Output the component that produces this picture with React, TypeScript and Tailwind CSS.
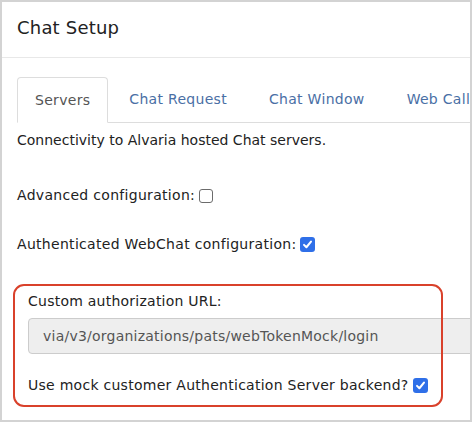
import React from "react";

const font = { fontFamily: '"DejaVu Sans", sans-serif' };

function Box({ checked }: { checked?: boolean }) {
  if (checked) {
    return (
      <span className="inline-flex w-[15px] h-[15px] rounded-[3px] bg-[#2f6fe8] items-center justify-center align-middle">
        <svg width="11" height="11" viewBox="0 0 12 12">
          <path d="M2.2 6.4 L4.8 9 L9.8 2.8" fill="none" stroke="white" strokeWidth="2.2" strokeLinecap="round" strokeLinejoin="round" />
        </svg>
      </span>
    );
  }
  return <span className="inline-block w-[14px] h-[14px] rounded-[3px] border border-[#6b6b6b] bg-white align-middle" />;
}

export default function App() {
  return (
    <div className="relative w-[472px] h-[422px] border-2 border-[#d3d3d3] bg-white overflow-hidden text-[#222] text-[14px]" style={font}>
      <div className="h-[56px] border-b border-[#e8e8e8] pl-[15px] flex items-center">
        <span className="text-[18px] text-[#222] pb-[5px] tracking-[0.2px]">Chat Setup</span>
      </div>
      <div className="pl-[15px]">
        <div className="mt-[19px] flex h-[46px] border-b border-[#dddddd] whitespace-nowrap tracking-[0.3px]">
          <div className="h-[46px] px-[17px] flex items-center border border-[#dddddd] border-b-white rounded-t-[4px] bg-white text-[#555]">
            Servers
          </div>
          <div className="h-[45px] px-[21px] flex items-center text-[#4a6fa5]">Chat Request</div>
          <div className="h-[45px] px-[21px] flex items-center text-[#4a6fa5]">Chat Window</div>
          <div className="h-[45px] px-[21px] flex items-center text-[#4a6fa5]">Web Call</div>
        </div>
        <p className="mt-[7px] leading-[21px] whitespace-nowrap">Connectivity to Alvaria hosted Chat servers.</p>
        <p className="mt-[34px] leading-[21px] whitespace-nowrap flex items-center gap-[4px] tracking-[0.3px]">
          Advanced configuration:<Box />
        </p>
        <p className="mt-[28px] leading-[21px] whitespace-nowrap flex items-center gap-[4px] tracking-[0.3px]">
          Authenticated WebChat configuration:<Box checked />
        </p>
        <div className="pl-[11px] mt-[36px]">
          <p className="leading-[21px] whitespace-nowrap tracking-[0.24px]">Custom authorization URL:</p>
          <div className="mt-[6px] w-[460px] h-[36px] border border-[#cccccc] rounded-l-[4px] bg-[#eeeeee] pl-[14px] flex items-center text-[#555] whitespace-nowrap tracking-[0.23px]">
            via/v3/organizations/pats/webTokenMock/login
          </div>
          <p className="mt-[21px] leading-[21px] whitespace-nowrap flex items-center gap-[4px] tracking-[0.27px]">
            Use mock customer Authentication Server backend?<Box checked />
          </p>
        </div>
      </div>
      <div className="absolute left-[11px] top-[282px] w-[430px] h-[123px] border-2 border-[#d9412b] rounded-[11px] pointer-events-none" />
    </div>
  );
}
